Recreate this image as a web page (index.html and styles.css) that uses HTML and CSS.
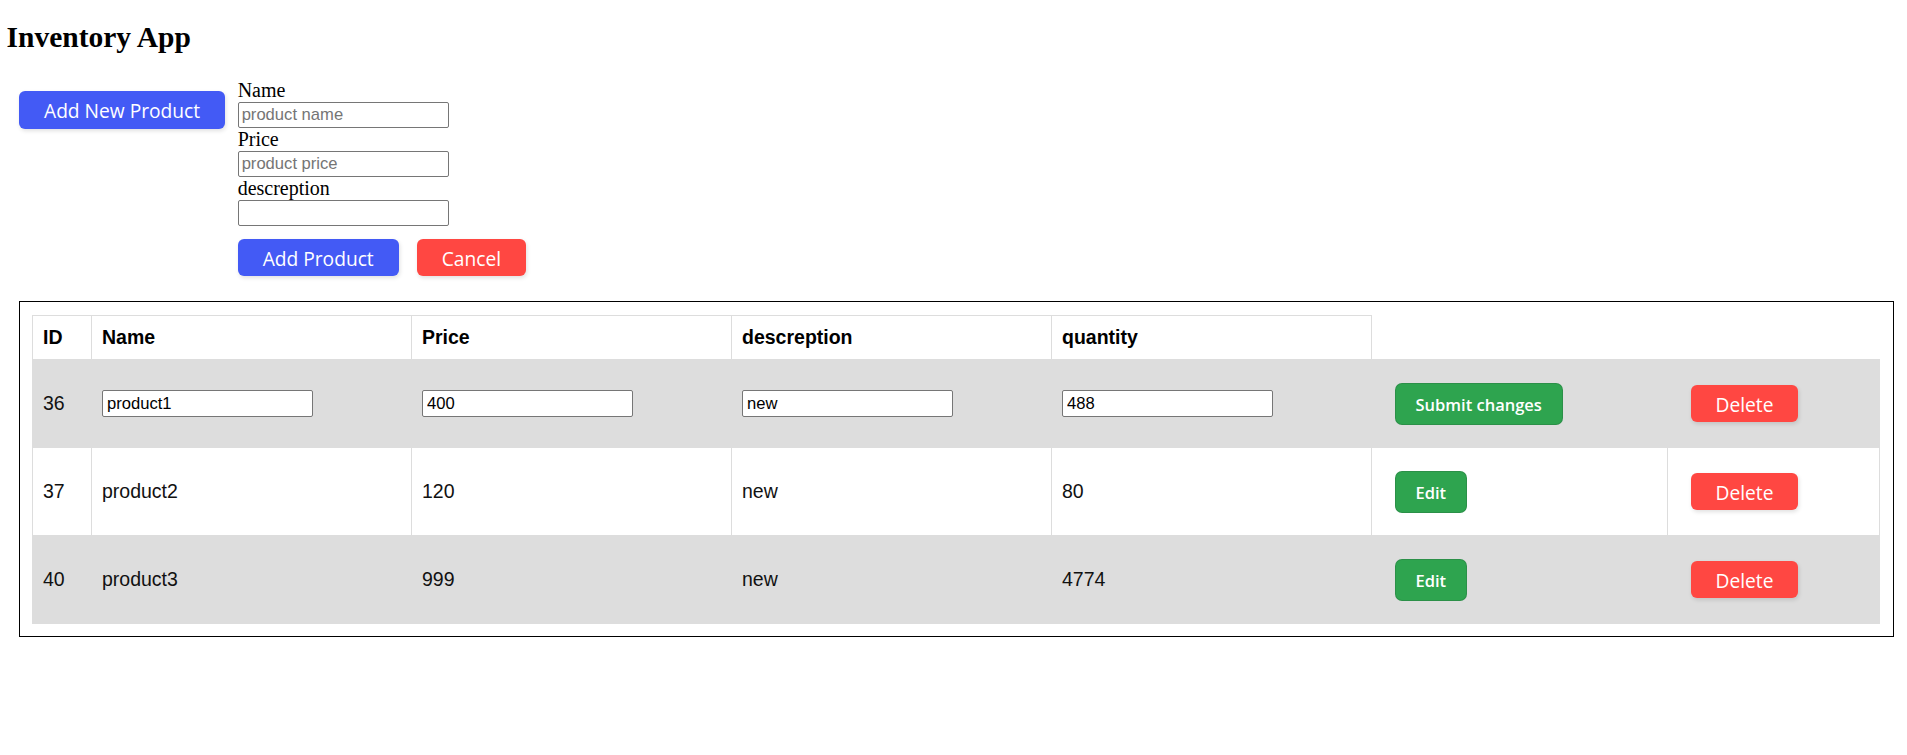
FILE: index.html
```html
<!DOCTYPE html>
<html lang="en">
<head>
<meta charset="utf-8">
<title>Inventory App</title>
<link rel="stylesheet" href="styles.css">
</head>
<body>
  <h2 class="title">Inventory App</h2>

  <section class="add-section">
    <button class="btn btn-blue btn-open" type="button">Add New Product</button>
    <form class="add-form">
      <label class="field-label" for="pname">Name</label>
      <input class="field-input" id="pname" type="text" placeholder="product name">
      <label class="field-label" for="pprice">Price</label>
      <input class="field-input" id="pprice" type="text" placeholder="product price">
      <label class="field-label" for="pdesc">descreption</label>
      <input class="field-input" id="pdesc" type="text">
      <div class="form-actions">
        <button class="btn btn-blue" type="button">Add Product</button>
        <button class="btn btn-red" type="button">Cancel</button>
      </div>
    </form>
  </section>

  <div class="table-box">
    <table class="inv-table">
      <colgroup>
        <col class="col-id">
        <col class="col-wide">
        <col class="col-wide">
        <col class="col-wide">
        <col class="col-wide">
        <col class="col-act">
        <col>
      </colgroup>
      <thead>
        <tr>
          <th>ID</th>
          <th>Name</th>
          <th>Price</th>
          <th>descreption</th>
          <th>quantity</th>
        </tr>
      </thead>
      <tbody>
        <tr>
          <td>36</td>
          <td><input class="cell-input" type="text" value="product1"></td>
          <td><input class="cell-input" type="text" value="400"></td>
          <td><input class="cell-input" type="text" value="new"></td>
          <td><input class="cell-input" type="text" value="488"></td>
          <td><button class="btn-green" type="button">Submit changes</button></td>
          <td><button class="btn btn-red btn-del" type="button">Delete</button></td>
        </tr>
        <tr>
          <td>37</td>
          <td>product2</td>
          <td>120</td>
          <td>new</td>
          <td>80</td>
          <td><button class="btn-green" type="button">Edit</button></td>
          <td><button class="btn btn-red btn-del" type="button">Delete</button></td>
        </tr>
        <tr>
          <td>40</td>
          <td>product3</td>
          <td>999</td>
          <td>new</td>
          <td>4774</td>
          <td><button class="btn-green" type="button">Edit</button></td>
          <td><button class="btn btn-red btn-del" type="button">Delete</button></td>
        </tr>
      </tbody>
    </table>
  </div>
</body>
</html>
```

FILE: styles.css
```css
html, body {
  background: #ffffff;
}

body {
  margin: 0;
  padding: 0 0 0 6.5px;
  font-family: "Liberation Serif", "Times New Roman", serif;
  color: #000;
}

.title {
  font-family: "Liberation Serif", "Times New Roman", serif;
  font-size: 29.5px;
  font-weight: bold;
  line-height: 34px;
  margin: 20px 0 24.5px 0;
}

.add-section {
  display: flex;
  align-items: flex-start;
}

.btn {
  font-family: "Open Sans", "Noto Sans", sans-serif;
  font-size: 19.2px;
  font-weight: 400;
  color: #ffffff;
  border: 0;
  border-radius: 6px;
  height: 37px;
  padding: 2px 25px 0 25px;
  line-height: 35px;
  box-shadow: rgba(0, 0, 0, 0.12) 1px 2px 4px;
  cursor: pointer;
  box-sizing: border-box;
  white-space: nowrap;
}

.btn-blue {
  background: #435af5;
}

.btn-red {
  background: #ff4742;
}

.btn-open {
  height: 38px;
  margin: 12px 12.5px;
}

.add-form {
  display: flex;
  flex-direction: column;
  align-items: flex-start;
}

.field-label {
  display: block;
  font-size: 20px;
  line-height: 23px;
  height: 23px;
}

.field-input {
  display: block;
  box-sizing: border-box;
  width: 211px;
  height: 26px;
  margin: 0;
  padding: 0 3px;
  border: 1px solid #767676;
  border-radius: 2px;
  font-family: "Liberation Sans", Arial, sans-serif;
  font-size: 16.6px;
  color: #000;
  background: #fff;
}

.field-input::placeholder {
  color: #757575;
}

.form-actions {
  display: flex;
  gap: 18px;
  margin: 13.5px 0 12.5px 0;
}

.table-box {
  margin: 12.5px 13.5px 0 12.5px;
  border: 1px solid #000;
  padding: 13px 13px 12px 12px;
}

.inv-table {
  width: 100%;
  border-collapse: collapse;
  table-layout: fixed;
  font-family: "Liberation Sans", Arial, sans-serif;
  font-size: 19.5px;
  color: #111;
}

.col-id {
  width: 59px;
}

.col-wide {
  width: 320px;
}

.col-act {
  width: 296px;
}

.inv-table th {
  text-align: left;
  font-weight: bold;
  color: #000;
  padding: 10px;
  line-height: 23px;
  border: 1px solid #dddddd;
}

.inv-table td {
  padding: 13px 10px;
  line-height: 23px;
  border: 1px solid #dddddd;
  vertical-align: middle;
  white-space: nowrap;
}

.inv-table tbody tr:nth-child(odd) {
  background: #dddddd;
}

.cell-input {
  display: block;
  box-sizing: border-box;
  width: 211px;
  height: 27px;
  margin: 0;
  padding: 0 4px;
  border: 1px solid #767676;
  border-radius: 2px;
  font-family: "Liberation Sans", Arial, sans-serif;
  font-size: 16.6px;
  color: #000;
  background: #fff;
}

.btn-green {
  display: inline-block;
  box-sizing: border-box;
  height: 42px;
  margin: 0 12.5px;
  padding: 1px 20px 0 20px;
  border: 1px solid rgba(27, 31, 35, 0.15);
  border-radius: 7px;
  background: #2ea44f;
  color: #fff;
  font-family: "Open Sans", "Noto Sans", sans-serif;
  font-size: 16.5px;
  font-weight: 600;
  line-height: 39px;
  vertical-align: middle;
  white-space: nowrap;
  cursor: pointer;
}

.btn-del {
  display: inline-block;
  margin: 12px 12.5px;
  vertical-align: middle;
}
```
